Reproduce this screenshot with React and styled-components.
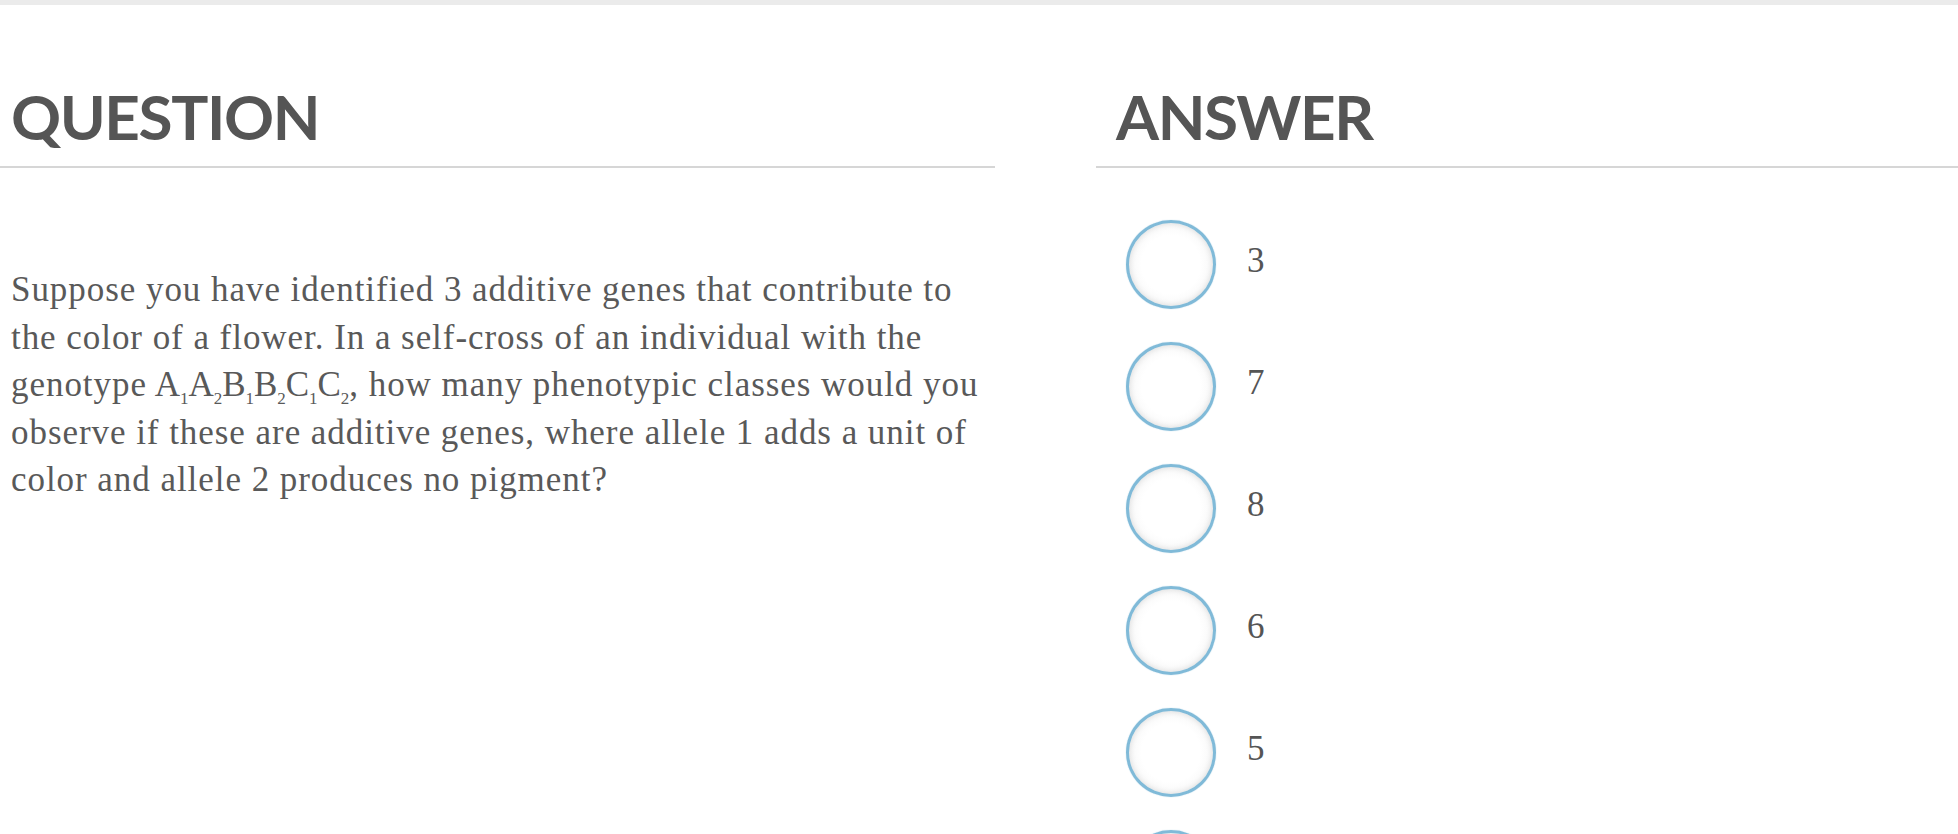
import React from "react";
import styled, { createGlobalStyle } from "styled-components";

const Global = createGlobalStyle`
  html, body { margin: 0; padding: 0; background: #fff; }
  body { overflow: hidden; }
`;

const Page = styled.div`
  border-top: 5px solid #ebebeb;
  display: grid;
  grid-template-columns: 995px 1fr;
  column-gap: 101px;
  padding-top: 73px;
`;

const Column = styled.section`
  display: flex;
  flex-direction: column;
`;

const Heading = styled.h2`
  margin: 0;
  font-family: Lato, "Open Sans", sans-serif;
  font-weight: 700;
  font-size: 62px;
  letter-spacing: -1.4px;
  line-height: 76px;
  color: #555;
  padding: 0 0 12px ${(p) => p.$indent}px;
  border-bottom: 2px solid #d6d6d6;
`;

const QuestionText = styled.p`
  margin: 98px 0 0;
  padding: 0 12px 0 11px;
  font-family: "Liberation Serif", serif;
  font-size: 35px;
  line-height: 47.6px;
  color: #595959;
  letter-spacing: 0.95px;

  sub {
    font-size: 17px;
    letter-spacing: 0;
    line-height: 0;
    vertical-align: -8px;
    margin-left: -1px;
    margin-right: 0;
  }
`;

const Options = styled.ul`
  list-style: none;
  margin: 52px 0 0;
  padding: 0 0 0 30px;
  display: flex;
  flex-direction: column;
  gap: 34px;
`;

const Option = styled.li`
  display: flex;
  align-items: center;
  gap: 31px;
  height: 88px;
`;

const Radio = styled.span`
  box-sizing: border-box;
  width: 90px;
  height: 89px;
  flex: none;
  border-radius: 50%;
  border: 3px solid #80bad8;
  background: radial-gradient(circle at 50% 50%, #ffffff 50%, #f5f5f5 80%, #e2e2e2 100%);
  box-shadow: inset 0 0 6px rgba(0, 0, 0, 0.13), 0 0 1px rgba(128, 186, 216, 0.8);
`;

const OptionLabel = styled.span`
  font-family: "Liberation Serif", serif;
  font-size: 35px;
  color: #555;
  margin-top: -6px;
`;

const answers = ["3", "7", "8", "6", "5", null];

export default function App() {
  return (
    <>
      <Global />
      <Page>
        <Column>
          <Heading $indent={11}>QUESTION</Heading>
          <QuestionText>
            Suppose you have identified 3 additive genes that contribute to the
            color of a flower. In a self-cross of an individual with the genotype
            A<sub>1</sub>A<sub>2</sub>B<sub>1</sub>B<sub>2</sub>C<sub>1</sub>C<sub>2</sub>, how
            many phenotypic classes would you observe if these are additive genes,
            where allele 1 adds a unit of color and allele 2 produces no pigment?
          </QuestionText>
        </Column>
        <Column>
          <Heading $indent={20}>ANSWER</Heading>
          <Options>
            {answers.map((a, i) => (
              <Option key={i}>
                <Radio role="radio" aria-checked="false" />
                {a && <OptionLabel>{a}</OptionLabel>}
              </Option>
            ))}
          </Options>
        </Column>
      </Page>
    </>
  );
}
